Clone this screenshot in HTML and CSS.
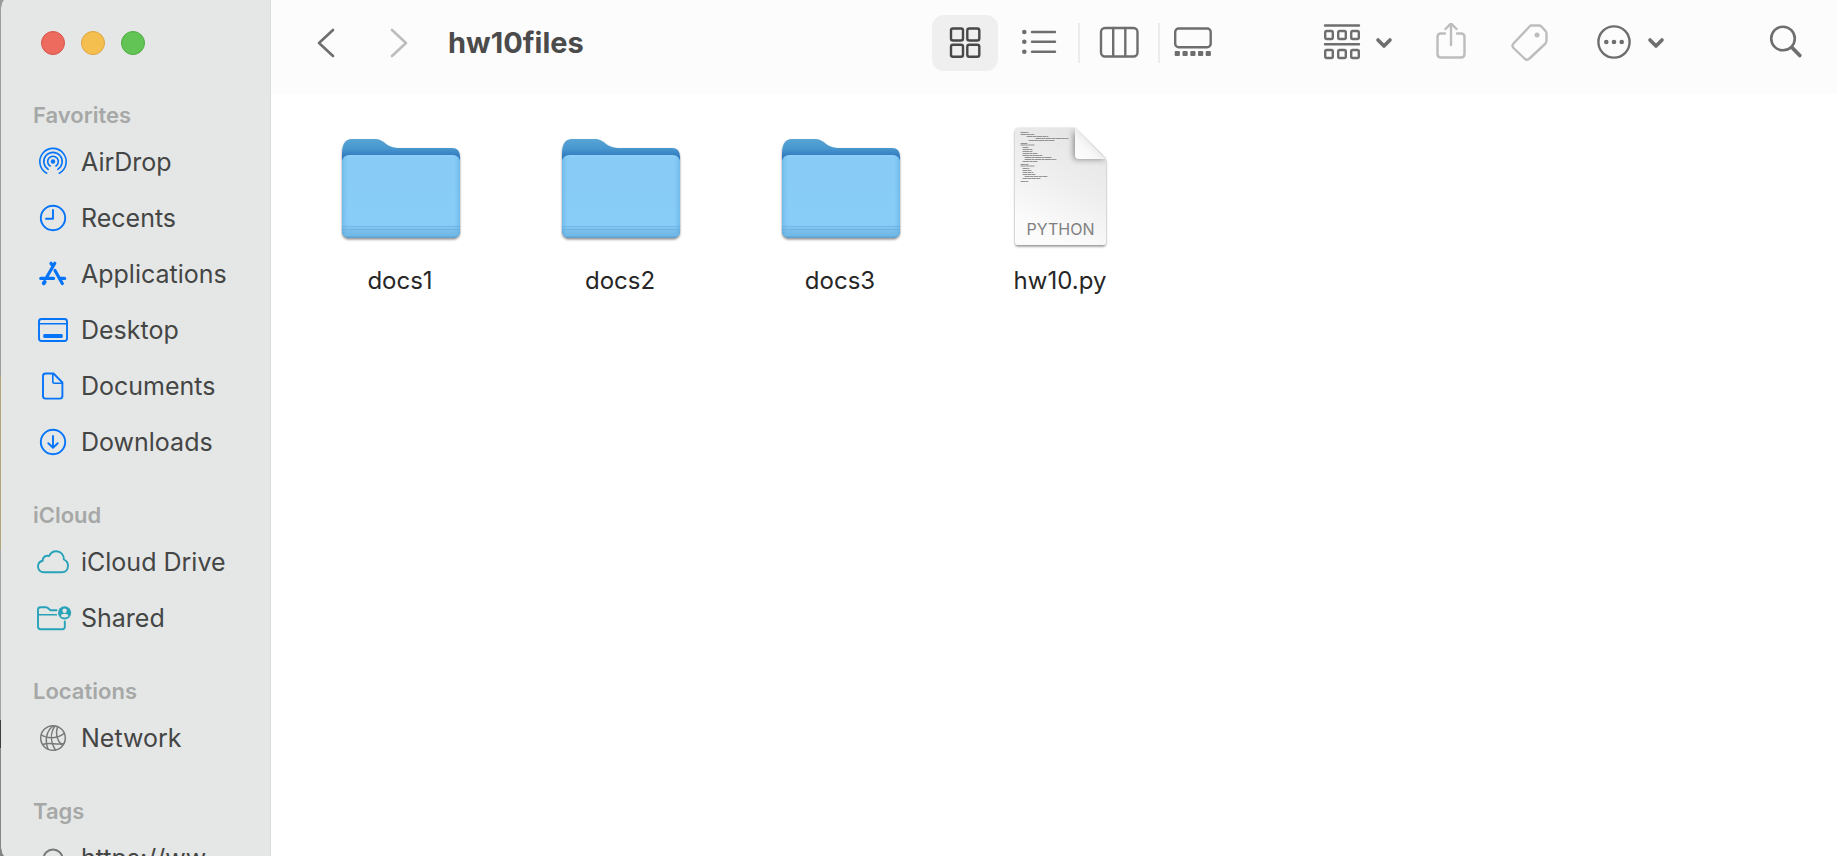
FILE: index.html
```html
<!DOCTYPE html>
<html lang="en">
<head>
<meta charset="utf-8">
<title>hw10files</title>
<link rel="stylesheet" href="styles.css">
</head>
<body>
<svg class="defs" width="0" height="0" aria-hidden="true">
  <defs>
    <linearGradient id="folder-back" x1="0" y1="0" x2="0" y2="1">
      <stop offset="0" stop-color="#58a4d6"/><stop offset="0.1" stop-color="#4796ce"/><stop offset="0.18" stop-color="#3079be"/><stop offset="1" stop-color="#3079be"/>
    </linearGradient>
    <linearGradient id="folder-front" x1="0" y1="0" x2="0" y2="1">
      <stop offset="0" stop-color="#8fd2fb"/><stop offset="0.04" stop-color="#87cbf6"/><stop offset="0.84" stop-color="#88ccf8"/><stop offset="0.9" stop-color="#7cc0ec"/><stop offset="0.97" stop-color="#70b8e7"/><stop offset="1" stop-color="#5a9fce"/>
    </linearGradient>
    <linearGradient id="folder-sides" x1="0" y1="0" x2="1" y2="0">
      <stop offset="0" stop-color="#4f9fd4" stop-opacity=".4"/><stop offset="0.05" stop-color="#69b5e6" stop-opacity="0"/><stop offset="0.95" stop-color="#69b5e6" stop-opacity="0"/><stop offset="1" stop-color="#4f9fd4" stop-opacity=".4"/>
    </linearGradient>
    <linearGradient id="page-fill" x1="1" y1="0" x2="0.6" y2="1">
      <stop offset="0" stop-color="#e2e2e2"/><stop offset="0.5" stop-color="#ededed"/><stop offset="1" stop-color="#fbfbfb"/>
    </linearGradient>
    <linearGradient id="page-curl" x1="0" y1="1" x2="0.7" y2="0.3">
      <stop offset="0" stop-color="#ffffff"/><stop offset="0.5" stop-color="#f8f8f8"/><stop offset="1" stop-color="#dedede"/>
    </linearGradient>
    <filter id="soft" x="-10%" y="-10%" width="120%" height="125%"><feDropShadow dx="0" dy="1.500" stdDeviation="1.200" flood-color="#000" flood-opacity=".45"/></filter>
    <filter id="curl-shadow" x="-40%" y="-40%" width="180%" height="180%"><feGaussianBlur stdDeviation="3"/></filter>
    <clipPath id="page-clip"><path d="M18 7H75L106 38V121Q106 125 102 125H19Q15 125 15 121V11Q15 7 19 7Z"/></clipPath>
    <symbol id="folder" viewBox="-1 -1 120 120" overflow="visible">
      <g filter="url(#soft)">
        <path d="M1 25Q1 10 11 10H35C43 10 45 19 57 19H111Q119 19 119 28V101Q119 109 111 109H9Q1 109 1 101Z" fill="url(#folder-back)"/>
        <path d="M1 34Q1 26 9 26H111Q119 26 119 34V101Q119 109 111 109H9Q1 109 1 101Z" fill="url(#folder-front)"/>
      </g>
      <path d="M1 34Q1 26 9 26H111Q119 26 119 34V101Q119 109 111 109H9Q1 109 1 101Z" fill="url(#folder-sides)"/>
      <path d="M1 97.500H119M1 100.500H119" stroke="#65ade0" stroke-width="1" opacity=".6" fill="none"/>
    </symbol>
  </defs>
</svg>
<div class="window">
  <aside class="sidebar">
    <div class="lights">
      <button class="light red" aria-label="Close"></button>
      <button class="light yellow" aria-label="Minimize"></button>
      <button class="light green" aria-label="Zoom"></button>
    </div>
    <nav>
      <section class="group">
        <h2>Favorites</h2>
        <a href="#airdrop"><svg class="icon blue" viewBox="0 0 36 32"><circle cx="18" cy="15.500" r="2.200" fill="currentColor" stroke="none"/><g stroke-width="1.600"><path d="M15.100 20A5.300 5.300 0 1 1 20.900 20"/><path d="M13.200 23.400A9.200 9.200 0 1 1 22.800 23.400"/><path d="M11.700 27.200A13.200 13.200 0 1 1 24.300 27.200"/></g></svg>AirDrop</a>
        <a href="#recents"><svg class="icon blue" viewBox="0 0 36 32"><circle cx="18" cy="16" r="12.200"/><path d="M18 8V16.700H11"/></svg>Recents</a>
        <a href="#applications"><svg class="icon blue" viewBox="0 0 36 32"><g stroke-width="3.200"><path d="M19.800 5.300L11.800 19"/><path d="M16 5.300L17.200 7.200"/><path d="M20 12.500L27.300 25.500"/><path d="M5.800 20.400H18.500"/><path d="M25 20.400H29.600"/></g><path d="M8.800 25.300L9.600 24" stroke-width="4"/></svg>Applications</a>
        <a href="#desktop"><svg class="icon blue" viewBox="0 0 36 32"><rect x="4" y="5" width="28" height="22" rx="2.500"/><path d="M4 9.800H32" stroke-width="1.500"/><rect x="8.300" y="20" width="19.400" height="4" rx="1" fill="currentColor" stroke="none"/></svg>Desktop</a>
        <a href="#documents"><svg class="icon blue" viewBox="0 0 36 32"><path d="M10.700 3.500H18.500L27.400 12.500V26Q27.400 28.600 24.800 28.600H10.700Q8 28.600 8 26V6Q8 3.500 10.700 3.500Z"/><path d="M17.800 4V11.500Q17.800 13.200 19.500 13.200H27" stroke-width="1.600"/></svg>Documents</a>
        <a href="#downloads"><svg class="icon blue" viewBox="0 0 36 32"><circle cx="18" cy="16" r="12.200"/><path d="M18 10V21.500M13.300 17.200L18 21.800L22.700 17.200"/></svg>Downloads</a>
      </section>
      <section class="group">
        <h2>iCloud</h2>
        <a href="#icloud-drive"><svg class="icon teal" viewBox="0 0 36 32"><path d="M9 26.300C5.300 26.300 3 23.600 3 20.500C3 17.500 5 15.300 7.700 14.700C7.600 11.200 10.700 8.900 14 10.100C15.600 7 18.200 5.200 21.200 5.200C25.700 5.200 29 8.700 28.900 13.500C31.600 14.700 33 17 33 19.800C33 23.600 30.400 26.300 26.800 26.300Z"/></svg>iCloud Drive</a>
        <a href="#shared"><svg class="icon teal" viewBox="0 0 36 32"><path d="M21.500 8.300H15.500L12.500 5.700Q11.700 5.200 10.800 5.200H5.500Q3 5.200 3 7.700V24.500Q3 27.200 5.700 27.200H27.300Q29.800 27.200 29.800 24.700V19.500" /><path d="M3.500 12.800H21.500" stroke-width="1.500"/><circle cx="29.600" cy="10.800" r="6.600" fill="currentColor" stroke="none"/><circle cx="29.600" cy="8.800" r="2.200" fill="#e5e7e6" stroke="none"/><path d="M25.800 14.200Q26.300 11.800 29.600 11.800T33.400 14.200Q31.900 15.600 29.600 15.600T25.800 14.200Z" fill="#e5e7e6" stroke="none"/></svg>Shared</a>
      </section>
      <section class="group">
        <h2>Locations</h2>
        <a href="#network"><svg class="icon gray" viewBox="0 0 36 32"><g stroke-width="1.500"><circle cx="18" cy="16" r="12.300"/><path d="M6.500 13C12 16.800 23 16.800 29 11.500M8 22.500C14 19.800 22 23.500 28.800 21.500"/><path d="M18 4C11.500 9 9.500 18 13 27M20 4C15 11 15.500 20 20.500 28M22.500 4.500C20 13 22 19 27.500 23.500"/></g></svg>Network</a>
      </section>
      <section class="group">
        <h2>Tags</h2>
        <a href="#tag"><svg class="icon gray" viewBox="0 0 36 32"><circle cx="18" cy="17" r="9.500"/></svg>https://ww</a>
      </section>
    </nav>
  </aside>
  <main>
    <header class="toolbar">
      <button class="nav-btn" aria-label="Back"><svg width="24" height="34" viewBox="0 0 24 34"><path d="M19 4L5 17L19 30" stroke-width="2.600"/></svg></button>
      <button class="nav-btn faded" aria-label="Forward"><svg width="24" height="34" viewBox="0 0 24 34"><path d="M5 4L19 17L5 30" stroke-width="2.600"/></svg></button>
      <h1>hw10files</h1>
      <div class="views">
        <button class="view active" aria-label="Icon view"><svg width="40" height="40" viewBox="0 0 40 40"><rect x="6" y="5.500" width="12" height="12" rx="2"/><rect x="22.300" y="5.500" width="12" height="12" rx="2"/><rect x="6" y="21.800" width="12" height="12" rx="2"/><rect x="22.300" y="21.800" width="12" height="12" rx="2"/></svg></button>
        <button class="view list" aria-label="List view"><svg width="40" height="40" viewBox="0 0 40 40"><path d="M13 9H36M13 18.800H36M13 28.700H36"/><g fill="currentColor" stroke="none"><circle cx="5.300" cy="9" r="2.300"/><circle cx="5.300" cy="18.800" r="2.300"/><circle cx="5.300" cy="28.700" r="2.300"/></g></svg></button>
        <span class="rule"></span>
        <button class="view" aria-label="Column view"><svg width="40" height="40" viewBox="0 0 40 40"><rect x="2" y="5" width="36.500" height="28.500" rx="4" /><path d="M14.200 5V33M26.300 5V33"/></svg></button>
        <span class="rule"></span>
        <button class="view" aria-label="Gallery view"><svg width="40" height="40" viewBox="0 0 40 40"><rect x="2.200" y="5.500" width="35.500" height="18.700" rx="3.500"/><g fill="currentColor" stroke="none"><rect x="1.700" y="28" width="5.200" height="5" rx="1"/><rect x="9.500" y="28" width="5.200" height="5" rx="1"/><rect x="17.300" y="28" width="5.200" height="5" rx="1"/><rect x="25" y="28" width="5.200" height="5" rx="1"/><rect x="32.700" y="28" width="5.200" height="5" rx="1"/></g></svg></button>
      </div>
      <div class="actions">
        <button class="tool" aria-label="Group items"><svg width="40" height="40" viewBox="0 0 40 40"><path d="M3 2.500H37M3 21.200H37"/><g><rect x="3.200" y="8" width="7.600" height="8" rx="1.500"/><rect x="16.200" y="8" width="7.600" height="8" rx="1.500"/><rect x="29.200" y="8" width="7.600" height="8" rx="1.500"/><rect x="3.200" y="27" width="7.600" height="8" rx="1.500"/><rect x="16.200" y="27" width="7.600" height="8" rx="1.500"/><rect x="29.200" y="27" width="7.600" height="8" rx="1.500"/></g></svg><svg width="20" height="40" viewBox="0 0 20 40"><path d="M4 17L10 23L16 17" stroke-width="3.600"/></svg></button>
        <button class="tool faded" aria-label="Share"><svg width="40" height="40" viewBox="0 0 40 40"><path d="M14 10.500H10Q6.500 10.500 6.500 14V31Q6.500 34.500 10 34.500H30Q33.500 34.500 33.500 31V14Q33.500 10.500 30 10.500H26M20 22V0.500M14.500 6L20 0.300L25.500 6"/></svg></button>
        <button class="tool faded" aria-label="Edit tags"><svg width="44" height="40" viewBox="0 0 44 40"><path d="M22.500 2.500H31Q32.500 2.500 33.500 3.500L37.500 8Q38.500 9 38.500 10.500V17.500Q38.500 19.500 37 21L21.500 35.500Q19 38 16.500 35.500L5.500 25Q3.500 22.500 5.500 20.500Z"/><circle cx="29" cy="12" r="2.500" fill="currentColor" stroke="none"/></svg></button>
        <button class="tool more" aria-label="More actions"><svg width="40" height="40" viewBox="0 0 40 40"><circle cx="20" cy="19" r="15.600"/><g fill="currentColor" stroke="none"><circle cx="12.300" cy="19" r="2.300"/><circle cx="20" cy="19" r="2.300"/><circle cx="27.700" cy="19" r="2.300"/></g></svg><svg width="20" height="40" viewBox="0 0 20 40"><path d="M4 17L10 23L16 17" stroke-width="3.600"/></svg></button>
      </div>
      <button class="tool" aria-label="Search"><svg width="40" height="40" viewBox="0 0 40 40"><circle cx="17" cy="15.500" r="11.800" stroke-width="2.600"/><path d="M26 24.500L33.800 32.500" stroke-width="3.800"/></svg></button>
    </header>
    <div class="files">
      <a class="file" href="#docs1"><svg class="art" viewBox="0 0 120 120"><use href="#folder"/></svg><span>docs1</span></a>
      <a class="file" href="#docs2"><svg class="art" viewBox="0 0 120 120"><use href="#folder"/></svg><span>docs2</span></a>
      <a class="file" href="#docs3"><svg class="art" viewBox="0 0 120 120"><use href="#folder"/></svg><span>docs3</span></a>
      <a class="file" href="#hw10"><svg class="art" viewBox="0 8 120 120">
        <path d="M18 7.500H75L106 39V122Q106 125 103 125H18Q15 125 15 122V10.500Q15 7.500 18 7.500Z" fill="url(#page-fill)" filter="url(#soft)"/>
        <g clip-path="url(#page-clip)"><path d="M74 10V39H107Z" fill="#000" opacity=".45" filter="url(#curl-shadow)"/></g>
        <path d="M75 7.500V35Q75 39 79 39H106Z" fill="url(#page-curl)"/>
        <g stroke="#777" stroke-width=".9" fill="none" opacity=".85">
          <path d="M21 12.500h7M21 14.500h13M27 16.500h21M36 18.500h32M29 20.500h25" stroke-dasharray="5 1 3 1"/>
          <path d="M21 23.500h7M21 25h13M23 27.500h5M23 29.500h9M23 31.500h9M23 33.500h14M23 35.500h19M25 37.500h27M25 39.500h31M23 41.500h14" stroke-dasharray="6 1 2 1"/>
          <path d="M21 44.500h7M21 46h13M23 48.500h6M23 50.500h9M23 52.500h10M23 54.500h12M25 56.500h22M23 58.500h18M21 61.500h7" stroke-dasharray="4 1 3 1"/>
        </g>
        <text x="60.500" y="115" class="kind">PYTHON</text>
      </svg><span>hw10.py</span></a>
    </div>
  </main>
</div>
</body>
</html>
```
FILE: styles.css
```css
* { box-sizing: border-box; }
body {
  margin: 0;
  font-family: Inter, "Liberation Sans", sans-serif;
  background: linear-gradient(#9c9c9c 0 376px, #b1a57e 376px 550px, #a3a3a3 550px 720px, #3d3d3d 720px 748px, #858585 748px);
}
.defs { position: absolute; }
button { border: 0; padding: 0; background: none; font: inherit; color: #6e6e6e; display: flex; align-items: center; justify-content: center; }
a { color: inherit; text-decoration: none; }
svg { flex: none; fill: none; stroke: currentColor; stroke-width: 2.4; stroke-linecap: round; stroke-linejoin: round; }

.window { display: flex; height: 100vh; margin-left: 1px; overflow: hidden; border-radius: 4px 0 0 4px / 14px 0 0 14px; background: #fff; }

.sidebar { width: 270px; flex: none; overflow: hidden; background: #e5e7e6; border-right: 1px solid #d9dcdb; font-optical-sizing: none; }
.lights { display: flex; gap: 16px; padding: 31px 0 0 40px; height: 96px; }
.light { width: 24px; height: 24px; border-radius: 50%; border: 1px solid; }
.red { background: #ed6a5e; border-color: #d65548; }
.yellow { background: #f5bf4f; border-color: #dba540; }
.green { background: #61c454; border-color: #4fac42; }
.group { margin-bottom: 26px; }
.group h2 { margin: 0; padding-left: 32px; font-size: 22px; line-height: 38px; font-weight: 600; color: #a6a8a7; }
.group a { display: flex; align-items: center; gap: 10px; height: 56px; padding-left: 34px; font-size: 25px; color: #444545; white-space: nowrap; }
.icon { width: 36px; height: 32px; stroke-width: 1.9; overflow: visible; }
.blue { color: #0674f8; }
.teal { color: #28a2b8; }
.gray { color: #777978; }

main { flex: 1; min-width: 0; background: #fff; }
.toolbar { display: flex; align-items: center; height: 94px; padding: 0 31px 8px 43px; background: #fcfcfc; }
.nav-btn { width: 24px; height: 34px; margin-right: 49px; }
.toolbar h1 { flex: 1; margin: 0; font-size: 29px; line-height: 36px; font-weight: 700; color: #4b4b4b; }
.nav-btn + h1 { margin-left: -12px; }
.toolbar .faded { color: #bdbdbd; }
.views { display: flex; align-items: center; margin-right: 96px; }
.view { width: 66px; height: 56px; border-radius: 12px; }
.view.active { background: #efefef; color: #484848; }
.list { margin: 0 6px 0 8px; }
.rule { width: 2px; height: 40px; background: #ececec; }
.rule + .view { margin-left: 6px; margin-right: 6px; }
.rule + .view:last-child { margin: 0; }
.actions { display: flex; align-items: center; gap: 37px; margin-right: 100px; }
.tool { gap: 12px; }
.more { margin-left: 5px; }

.files { display: grid; grid-template-columns: repeat(auto-fill, 220px); padding: 34px 19px; }
.file { display: flex; flex-direction: column; align-items: center; gap: 17px; font-size: 24px; line-height: 32px; color: #262626; }
.art { width: 120px; height: 120px; overflow: visible; stroke: none; }
.kind { font-size: 16px; fill: #808080; text-anchor: middle; }
```
